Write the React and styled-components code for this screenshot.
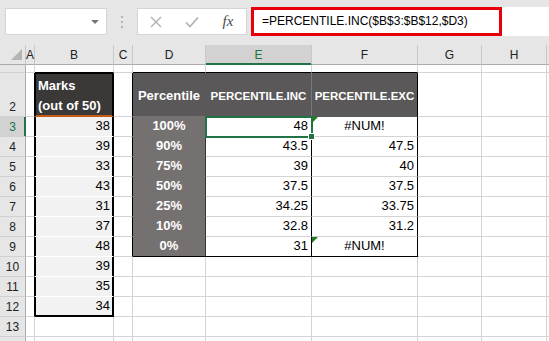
import React from 'react';
import styled, { createGlobalStyle } from 'styled-components';

const GlobalStyle = createGlobalStyle`
  body {
    margin: 0;
    background: #fff;
    font-family: "Liberation Sans", Arial, sans-serif;
  }
`;

const Window = styled.div`
  width: 549px;
  height: 341px;
  overflow: hidden;
  display: flex;
  flex-direction: column;
  background: #fff;
`;

const FormulaBar = styled.div`
  flex: none;
  height: 45px;
  box-sizing: border-box;
  background: #e6e6e6;
  display: flex;
  align-items: center;
  padding: 0 0 2px 5px;
`;

const NameBox = styled.div`
  width: 102px;
  height: 27px;
  box-sizing: border-box;
  background: #fff;
  border: 1px solid #d4d4d4;
  display: flex;
  align-items: center;
  justify-content: flex-end;
  padding-right: 7px;
`;

const Caret = styled.span`
  width: 0;
  height: 0;
  border-left: 4px solid transparent;
  border-right: 4px solid transparent;
  border-top: 4px solid #777;
`;

const Grip = styled.div`
  width: 2px;
  margin: 0 14px 0 14px;
  display: flex;
  flex-direction: column;
  gap: 3px;

  span {
    width: 2px;
    height: 2px;
    background: #b4b4b4;
  }
`;

const ActionBox = styled.div`
  width: 110px;
  height: 27px;
  box-sizing: border-box;
  background: #fff;
  border: 1px solid #d4d4d4;
  display: flex;
  align-items: center;
`;

const Action = styled.span`
  width: 36px;
  display: flex;
  justify-content: center;
  align-items: center;
  color: #4a4a4a;
  font-family: "Liberation Serif", "Times New Roman", serif;
  font-style: italic;
  font-size: 15px;
`;

const Field = styled.div`
  flex: 1;
  height: 29px;
  margin-left: 4px;
  background: #fff;
  display: flex;
`;

const Highlight = styled.div`
  width: 251px;
  box-sizing: border-box;
  border: 3px solid #e8000b;
  display: flex;
  align-items: center;
  padding: 0 0 1px 8px;
  font-size: 12px;
  color: #000;
  white-space: nowrap;
`;

const Sheet = styled.div`
  display: grid;
  grid-template-columns: 26px 9px 79px 19px 73px 106px 106px 64px 65px 1fr;
  grid-template-rows: 20px 8px 44px repeat(12, 20px);
`;

const Corner = styled.div`
  background: #e6e6e6;
  border-right: 1px solid #c8c8c8;
  border-bottom: 1px solid #ababab;
  display: flex;
  align-items: flex-end;
  justify-content: flex-end;
  padding: 0 3px 4px 0;
`;

const ColHead = styled.div`
  box-sizing: border-box;
  background: ${p => (p.$selected ? '#d2d2d2' : '#e6e6e6')};
  color: ${p => (p.$selected ? '#217346' : '#222')};
  border-right: 1px solid #c8c8c8;
  border-bottom: 1px solid ${p => (p.$selected ? '#217346' : '#ababab')};
  box-shadow: ${p => (p.$selected ? 'inset 0 -1px 0 #217346' : 'none')};
  display: flex;
  align-items: center;
  justify-content: center;
  font-size: 12px;
  padding-top: 1px;
`;

const RowHead = styled.div`
  box-sizing: border-box;
  overflow: hidden;
  background: ${p => (p.$selected ? '#d2d2d2' : '#e6e6e6')};
  color: ${p => (p.$selected ? '#217346' : '#222')};
  border-right: 1px solid ${p => (p.$selected ? '#217346' : '#ababab')};
  border-bottom: 1px solid #d0d0d0;
  box-shadow: ${p => (p.$selected ? 'inset -1px 0 0 #217346' : 'none')};
  display: flex;
  align-items: flex-end;
  justify-content: center;
  font-size: 12px;
  line-height: 14px;
  padding: 0 0 2px;
`;

const Cell = styled.div`
  position: relative;
  box-sizing: border-box;
  display: flex;
  align-items: ${p => p.$valign || 'flex-end'};
  justify-content: ${p => p.$align || 'flex-end'};
  padding: ${p => p.$pad || '0 3px 2px'};
  font-size: ${p => p.$size || 13}px;
  line-height: ${p => p.$lh || 16}px;
  color: ${p => p.$color || '#000'};
  font-weight: ${p => (p.$bold ? 700 : 400)};
  background: ${p => p.$bg || '#fff'};
  border-right: 1px solid ${p => p.$br || '#d4d4d4'};
  border-bottom: 1px solid ${p => p.$bb || '#d4d4d4'};
  box-shadow: ${p => p.$shadow || 'none'};
  z-index: ${p => (p.$active ? 2 : 'auto')};
  white-space: pre-line;

  &::before {
    content: ${p => (p.$flag ? '""' : 'none')};
    position: absolute;
    top: 0;
    left: 0;
    border-top: 6px solid #1e7f1e;
    border-right: 6px solid transparent;
  }

  &::after {
    content: ${p => (p.$active ? '""' : 'none')};
    position: absolute;
    right: -4px;
    bottom: -4px;
    width: 5px;
    height: 5px;
    background: #217346;
    border: 1px solid #fff;
  }
`;

const COLS = ['A', 'B', 'C', 'D', 'E', 'F', 'G', 'H', ''];
const ROWS = [1, 2, 3, 4, 5, 6, 7, 8, 9, 10, 11, 12, 13, 14];

const marks = ['38', '39', '33', '43', '31', '37', '48', '39', '35', '34'];
const pct = ['100%', '90%', '75%', '50%', '25%', '10%', '0%'];
const inc = ['48', '43.5', '39', '37.5', '34.25', '32.8', '31'];
const exc = ['#NUM!', '47.5', '40', '37.5', '33.75', '31.2', '#NUM!'];

const DARK = '#3b3838';
const HEAD = '#5a5858';
const SIDE = '#767171';
const headText = { $color: '#fff', $bold: true, $align: 'center', $valign: 'center', $pad: '3px 0 0' };

function cellFor(r, c) {
  const p = {};
  const col = COLS[c];

  if (col === 'A' && r >= 2 && r <= 12) p.$br = '#000';
  if (col === 'C' && r >= 2 && r <= 9) p.$br = '#000';
  if (r === 1 && ['B', 'D', 'E', 'F'].includes(col)) p.$bb = '#000';

  if (col === 'B' && r >= 2 && r <= 12) {
    const edges = ['inset 1px 0 0 #000', 'inset -1px 0 0 #000'];
    p.$br = '#000';
    if (r === 2) {
      Object.assign(p, {
        $bg: DARK, $color: '#fff', $bold: true, $align: 'flex-start',
        $lh: 20, $pad: '0 3px 0 3px', $bb: '#c55a11', text: 'Marks\n(out of 50)',
      });
      edges.push('inset 0 1px 0 #000', 'inset 0 -1px 0 #c55a11');
    } else {
      p.$bg = '#f2f2f2';
      p.$bb = r === 12 ? '#000' : '#fff';
      p.text = marks[r - 3];
      if (r === 12) edges.push('inset 0 -1px 0 #000');
    }
    p.$shadow = edges.join(', ');
  }

  if (col === 'D' && r >= 2 && r <= 9) {
    if (r === 2) Object.assign(p, headText, { $bg: HEAD, $br: HEAD, $bb: SIDE, text: 'Percentile' });
    else {
      Object.assign(p, headText, {
        $bg: SIDE, $br: '#333', $bb: r === 9 ? '#000' : SIDE, $pad: '0 0 2px', $valign: 'flex-end', text: pct[r - 3],
      });
    }
  }

  if ((col === 'E' || col === 'F') && r >= 2 && r <= 9) {
    const list = col === 'E' ? inc : exc;
    if (r === 2) {
      Object.assign(p, headText, {
        $bg: HEAD, $size: 11.5, $br: col === 'E' ? '#7a7878' : '#000', $bb: HEAD,
        text: col === 'E' ? 'PERCENTILE.INC' : 'PERCENTILE.EXC',
      });
    } else {
      p.$br = '#000';
      p.$bb = r === 9 ? '#000' : '#d4d4d4';
      p.text = list[r - 3];
      if (p.text === '#NUM!') {
        p.$align = 'center';
        p.$pad = '0 0 2px';
      }
      if (col === 'F' && (r === 3 || r === 9)) p.$flag = true;
      if (col === 'E' && r === 3) {
        p.$active = true;
        p.$br = '#217346';
        p.$bb = '#217346';
        p.$shadow = '0 0 0 1px #217346, inset 1px 1px 0 #217346';
      }
    }
  }

  return p;
}

const CornerMark = () => (
  <svg width="11" height="11" viewBox="0 0 11 11">
    <path d="M11 0 L11 11 L0 11 Z" fill="#b4b4b4" />
  </svg>
);

const CrossIcon = () => (
  <svg width="12" height="12" viewBox="0 0 12 12">
    <path d="M1 1 L11 11 M11 1 L1 11" stroke="#b0b0b0" strokeWidth="1.4" fill="none" />
  </svg>
);

const CheckIcon = () => (
  <svg width="14" height="12" viewBox="0 0 14 12">
    <path d="M1 6.5 L5 10.5 L13 1.5" stroke="#b0b0b0" strokeWidth="1.6" fill="none" />
  </svg>
);

// rows 1 and 14 are almost fully hidden, so their numbers don't show
const rowLabel = r => (r === 1 || r === 14 ? '' : r);

export default function App() {
  return (
    <Window>
      <GlobalStyle />
      <FormulaBar>
        <NameBox>
          <Caret />
        </NameBox>
        <Grip>
          <span />
          <span />
          <span />
        </Grip>
        <ActionBox>
          <Action><CrossIcon /></Action>
          <Action><CheckIcon /></Action>
          <Action>fx</Action>
        </ActionBox>
        <Field>
          <Highlight>=PERCENTILE.INC($B$3:$B$12,$D3)</Highlight>
        </Field>
      </FormulaBar>

      <Sheet>
        <Corner>
          <CornerMark />
        </Corner>
        {COLS.map(col => (
          <ColHead key={col || 'I'} $selected={col === 'E'}>{col}</ColHead>
        ))}
        {ROWS.map(r => (
          <React.Fragment key={r}>
            <RowHead $selected={r === 3}>{rowLabel(r)}</RowHead>
            {COLS.map((col, c) => {
              const { text, ...props } = cellFor(r, c);
              return (
                <Cell key={col || 'I'} {...props}>{text}</Cell>
              );
            })}
          </React.Fragment>
        ))}
      </Sheet>
    </Window>
  );
}
